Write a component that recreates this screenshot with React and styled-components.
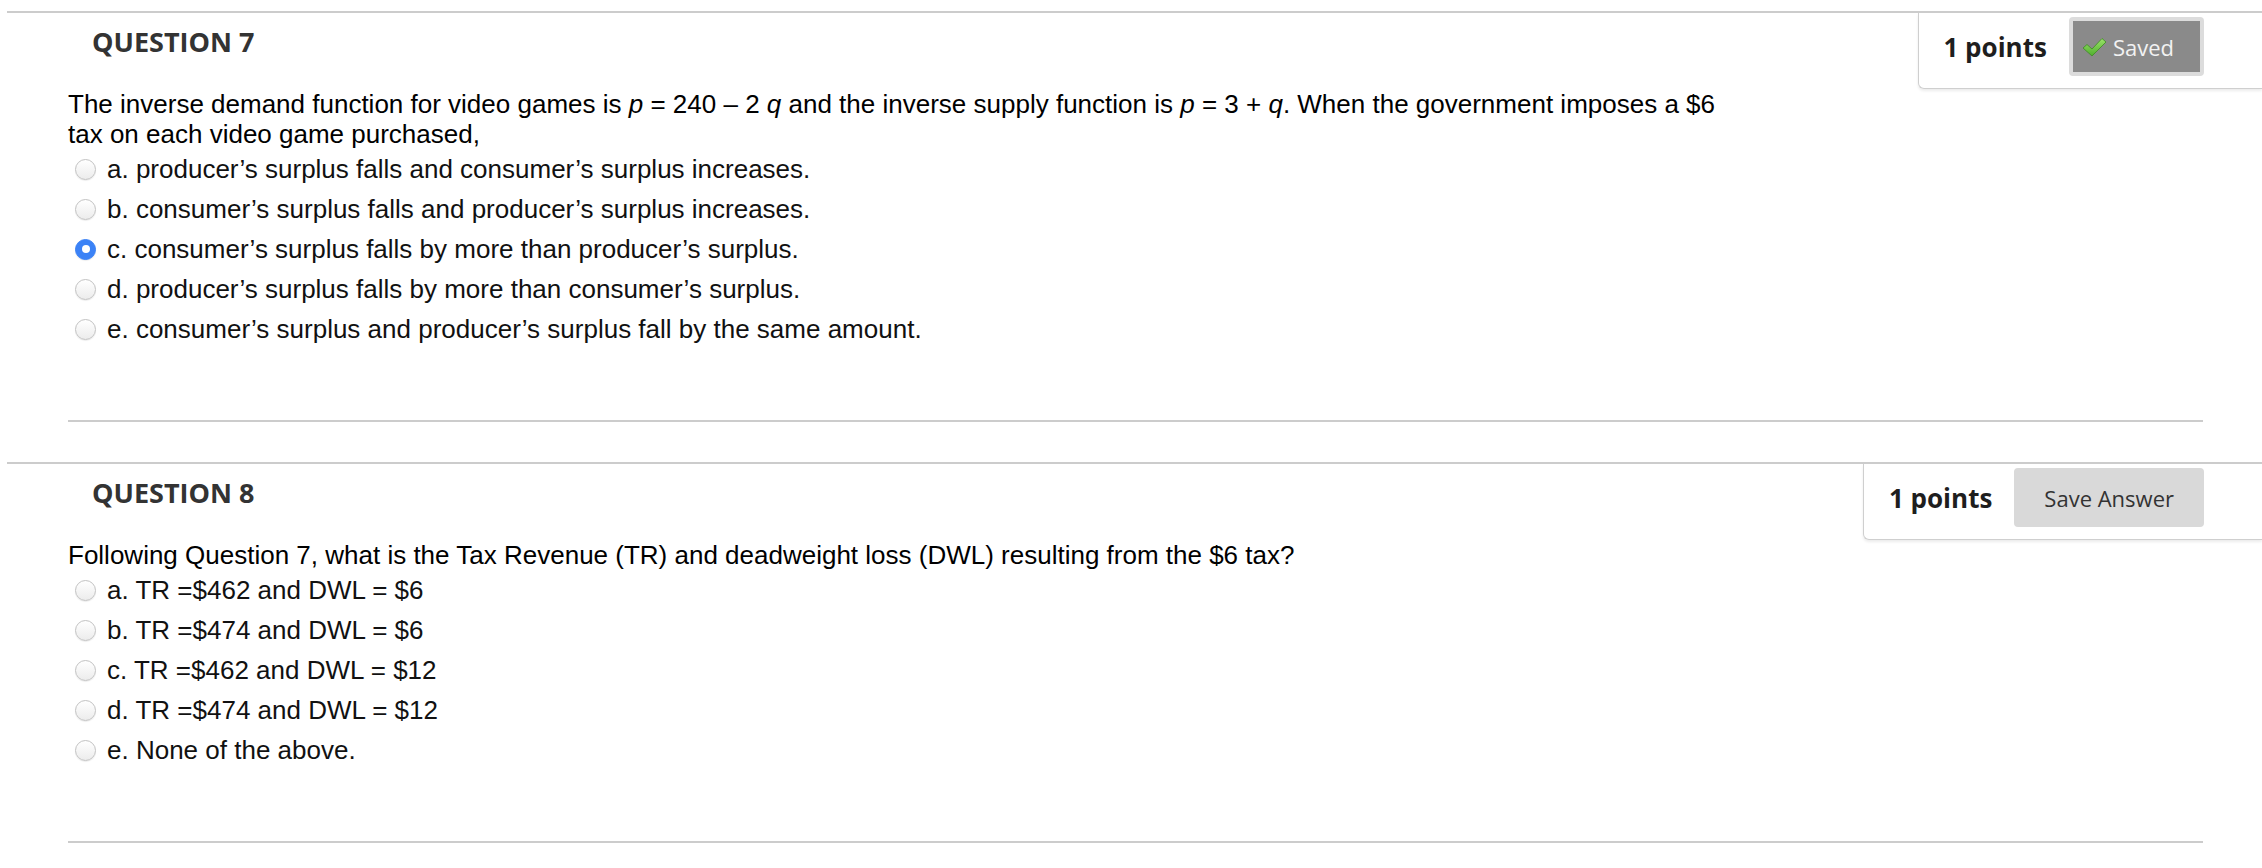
import styled, { createGlobalStyle } from "styled-components";

const GlobalStyle = createGlobalStyle`
  body {
    margin: 0;
    background: #ffffff;
    font-family: "Liberation Sans", Arial, sans-serif;
  }
`;

const Page = styled.div`
  padding-left: 7px;
  padding-top: 11px;
`;

const Question = styled.section`
  border-top: 2px solid #cccccc;
  margin-bottom: 40px;
`;

const Header = styled.div`
  display: flex;
  justify-content: space-between;
  align-items: flex-start;
`;

const Heading = styled.h2`
  margin: 0;
  padding: 13px 0 0 85px;
  font-family: "Open Sans", sans-serif;
  font-weight: 700;
  font-size: 27px;
  line-height: 32px;
  color: #333333;
`;

const PointsBox = styled.div`
  display: flex;
  align-items: center;
  gap: 22px;
  height: 76px;
  box-sizing: border-box;
  padding: 5px 58px 13px 25px;
  border-left: 1px solid #cfcfcf;
  border-bottom: 1px solid #cfcfcf;
  border-bottom-left-radius: 6px;
  box-shadow: 0 2px 3px rgba(0, 0, 0, 0.08);
`;

const Points = styled.span`
  font-family: "Open Sans", sans-serif;
  font-weight: 700;
  font-size: 26px;
  color: #1e1e1e;
`;

const Button = styled.button`
  display: flex;
  align-items: center;
  gap: 6px;
  height: 59px;
  box-sizing: border-box;
  padding: ${(p) => (p.saved ? "0 26px 0 9px" : "0 26px")};
  border: 4px solid ${(p) => (p.saved ? "#dcdcdc" : "#d9d9d9")};
  border-radius: 4px;
  background: ${(p) => (p.saved ? "#8a8a8a" : "#d9d9d9")};
  color: ${(p) => (p.saved ? "#f2f2f2" : "#333333")};
  font-family: "Open Sans", sans-serif;
  font-size: 22px;
  cursor: pointer;
`;

const Body = styled.div`
  padding-left: 61px;
  padding-right: 59px;
`;

const Prompt = styled.p`
  margin: 0;
  font-size: 26px;
  line-height: 30px;
  color: #000000;
  max-width: 1665px;
`;

const Options = styled.ul`
  list-style: none;
  margin: 0;
  padding: 0;
`;

const Option = styled.li`
  display: flex;
  align-items: center;
  height: 40px;
  font-size: 26px;
  color: #111111;
`;

const Radio = styled.span`
  position: relative;
  width: 21px;
  height: 21px;
  margin: 0 11px 0 7px;
  border-radius: 50%;
  box-sizing: border-box;
  flex-shrink: 0;
  border: 1px solid ${(p) => (p.checked ? "#3b82f6" : "#c2c2c2")};
  background: ${(p) =>
    p.checked ? "#3b82f6" : "linear-gradient(#ffffff, #ececec)"};
  box-shadow: 0 1px 1px rgba(0, 0, 0, 0.08);

  &::after {
    content: "";
    display: ${(p) => (p.checked ? "block" : "none")};
    position: absolute;
    left: 50%;
    top: 50%;
    width: 8px;
    height: 8px;
    margin: -4px 0 0 -4px;
    border-radius: 50%;
    background: #ffffff;
  }
`;

const Divider = styled.hr`
  margin: 71px 0 0 0;
  border: none;
  border-top: 2px solid #cccccc;
`;

const Check = () => (
  <svg width="25" height="20" viewBox="0 0 25 20">
    <defs>
      <linearGradient id="chk" x1="0" y1="0" x2="0" y2="1">
        <stop offset="0" stopColor="#9be36a" />
        <stop offset="1" stopColor="#4fae2e" />
      </linearGradient>
    </defs>
    <path
      d="M1 11 L5 7.5 L10 12 L20 1.5 L24 5 L10 19 Z"
      fill="url(#chk)"
      stroke="#3f8a25"
      strokeWidth="0.8"
      strokeLinejoin="round"
    />
  </svg>
);

const questions = [
  {
    num: 7,
    saved: true,
    prompt: (
      <>
        The inverse demand function for video games is <i>p</i> = 240 – 2 <i>q</i> and
        the inverse supply function is <i>p</i> = 3 + <i>q</i>. When the government
        imposes a $6 tax on each video game purchased,
      </>
    ),
    options: [
      "a. producer’s surplus falls and consumer’s surplus increases.",
      "b. consumer’s surplus falls and producer’s surplus increases.",
      "c. consumer’s surplus falls by more than producer’s surplus.",
      "d. producer’s surplus falls by more than consumer’s surplus.",
      "e. consumer’s surplus and producer’s surplus fall by the same amount.",
    ],
    checked: 2,
  },
  {
    num: 8,
    saved: false,
    prompt:
      "Following Question 7, what is the Tax Revenue (TR) and deadweight loss (DWL) resulting from the $6 tax?",
    options: [
      "a. TR =$462 and DWL = $6",
      "b. TR =$474 and DWL = $6",
      "c. TR =$462 and DWL = $12",
      "d. TR =$474 and DWL = $12",
      "e. None of the above.",
    ],
    checked: -1,
  },
];

const App = () => {
  return (
    <>
      <GlobalStyle />
      <Page>
        {questions.map((q) => (
          <Question key={q.num}>
            <Header>
              <Heading>QUESTION {q.num}</Heading>
              <PointsBox>
                <Points>1 points</Points>
                {q.saved ? (
                  <Button saved>
                    <Check />
                    Saved
                  </Button>
                ) : (
                  <Button>Save Answer</Button>
                )}
              </PointsBox>
            </Header>
            <Body>
              <Prompt>{q.prompt}</Prompt>
              <Options>
                {q.options.map((o, i) => (
                  <Option key={i}>
                    <Radio checked={i === q.checked} />
                    {o}
                  </Option>
                ))}
              </Options>
              <Divider />
            </Body>
          </Question>
        ))}
      </Page>
    </>
  );
};

export default App;
